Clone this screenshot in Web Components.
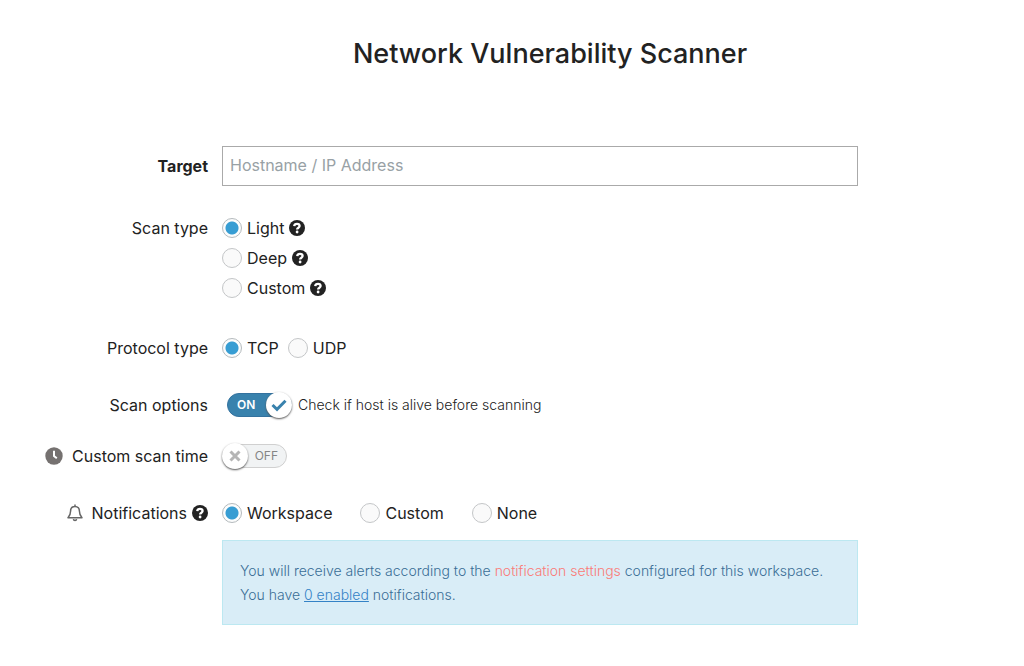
<!DOCTYPE html>
<html lang="en">
<head>
<meta charset="utf-8">
<title>Network Vulnerability Scanner</title>
<style>
body {
    margin: 0;
    background: #fff;
    color: #222;
    font-family: Inter, "Liberation Sans", sans-serif;
    font-size: 16px;
    line-height: 30px;
}
</style>
</head>
<body>
<scan-form></scan-form>

<script>
class HelpIcon extends HTMLElement {
    constructor() {
        super();
        this.attachShadow({ mode: 'open' }).innerHTML = `
    <style>
        :host{display: inline-flex;}
        svg{display: block; width: 16px; height: 16px;}
    </style>
    <svg viewBox="0 0 16 16" aria-hidden="true">
        <circle cx="8" cy="8" r="8" fill="#222"/>
        <path d="M5.2 6.2C5.4 4.6 6.5 3.9 8 3.9S10.6 4.8 10.6 6.1C10.6 7.8 8.1 7.6 8.1 9.5" fill="none" stroke="#fff" stroke-width="2.3"/>
        <circle cx="8.1" cy="12" r="1.4" fill="#fff"/>
    </svg>`;
    }
}
customElements.define('help-icon', HelpIcon);

class ClockIcon extends HTMLElement {
    constructor() {
        super();
        this.attachShadow({ mode: 'open' }).innerHTML = `
    <style>
        :host{display: inline-flex;}
        svg{display: block; width: 18px; height: 18px;}
    </style>
    <svg viewBox="0 0 18 18" aria-hidden="true">
        <circle cx="9" cy="9" r="8.7" fill="#757170"/>
        <path d="M9 3.8V9L11.8 11.2" fill="none" stroke="#fff" stroke-width="2"/>
    </svg>`;
    }
}
customElements.define('clock-icon', ClockIcon);

class BellIcon extends HTMLElement {
    constructor() {
        super();
        this.attachShadow({ mode: 'open' }).innerHTML = `
    <style>
        :host{display: inline-flex;}
        svg{display: block; width: 16px; height: 18px;}
    </style>
    <svg viewBox="0 0 16 18" aria-hidden="true" fill="none" stroke="#666" stroke-width="1.5" stroke-linejoin="round">
        <path d="M8 .6V2.4M8 2.4C5 2.4 3.6 4.6 3.6 7C3.6 10.6 2.8 11.8 1 13.7H15C13.2 11.8 12.4 10.6 12.4 7C12.4 4.6 11 2.4 8 2.4Z"/>
        <path d="M6.4 15.2C6.6 16.8 9.4 16.8 9.6 15.2"/>
    </svg>`;
    }
}
customElements.define('bell-icon', BellIcon);

// options="Light?|Deep?" - a trailing ? puts a help icon after the text
class RadioGroup extends HTMLElement {
    constructor() {
        super();
        this.attachShadow({ mode: 'open' });
    }
    connectedCallback() {
        const options = this.getAttribute('options').split('|');
        this.setAttribute('role', 'radiogroup');
        this.shadowRoot.innerHTML = `
    <style>
        :host{display: flex; flex-wrap: wrap; column-gap: 9px;}
        :host([layout="column"]){flex-direction: column; align-items: flex-start;}
        :host([layout="wide"]){column-gap: 28px;}
        label{display: flex; align-items: center; cursor: pointer;}
        input{
            appearance: none; width: 20px; height: 20px; margin: 0 5px 0 0;
            border: 1px solid #c4c6c8; border-radius: 50%; background: #fafafa;
        }
        input:checked{
            border-color: #b4babd;
            background: radial-gradient(circle, #379dd3 6px, #fbfcfc 7px);
        }
        help-icon{margin-left: 5px;}
    </style>
    ${options.map((text, i) => `
    <label><input type="radio" name="option" ${i === 0 ? 'checked' : ''}>${text.replace('?', '')}${text.endsWith('?') ? '<help-icon></help-icon>' : ''}</label>`).join('')}`;
    }
}
customElements.define('radio-group', RadioGroup);

class ToggleSwitch extends HTMLElement {
    constructor() {
        super();
        this.attachShadow({ mode: 'open' });
    }
    connectedCallback() {
        const text = this.getAttribute('text') || '';
        this.shadowRoot.innerHTML = `
    <style>
        :host{display: flex;}
        label{display: flex; align-items: center; gap: 6px; min-height: 30px; font-size: 14px; cursor: pointer;}
        input{position: absolute; opacity: 0; width: 1px; height: 1px; margin: 0;}
        .text{font-weight: 350;}
        .track{
            display: flex; align-items: center; flex-direction: row-reverse; justify-content: space-between;
            box-sizing: border-box; width: 65px; height: 24px; padding-right: 8px;
            border: 1px solid #d0d0d0; border-radius: 12px; background: #f1f3f4; color: #858585; font-size: 12px;
        }
        .knob{
            display: flex; align-items: center; justify-content: center;
            width: 26px; height: 26px; margin: 0 -1px;
            border-radius: 50%; background: #fff; box-shadow: 0 1px 2px #555;
        }
        svg{width: 16px; height: 16px; fill: none;}
        .yes, .on{display: none;}
        :checked + .track{
            flex-direction: row; padding: 0 0 0 9px;
            border-color: #34729f; background: #3982ad; color: #fff; font-weight: 600;
        }
        :checked + .track .yes{display: block;}
        :checked + .track .on{display: inline;}
        :checked + .track .no, :checked + .track .off{display: none;}
    </style>
    <label>
        <input type="checkbox" aria-label="${text || this.getAttribute('name')}" ${this.hasAttribute('checked') ? 'checked' : ''}>
        <span class="track">
            <span class="on">ON</span><span class="off">OFF</span>
            <span class="knob">
                <svg class="yes" viewBox="0 0 16 16"><path d="M1.5 8L6 12.3L14.5 3.8" stroke="#3982ad" stroke-width="3"/></svg>
                <svg class="no" viewBox="0 0 16 16"><path d="M3.5 3.5L12.5 12.5M12.5 3.5L3.5 12.5" stroke="#b5b5b5" stroke-width="3"/></svg>
            </span>
        </span>
        ${text ? `<span class="text">${text}</span>` : ''}
    </label>`;
    }
}
customElements.define('toggle-switch', ToggleSwitch);

class FormRow extends HTMLElement {
    constructor() {
        super();
        this.attachShadow({ mode: 'open' }).innerHTML = `
    <style>
        :host{display: grid; grid-template-columns: 208px minmax(0, 1fr); column-gap: 14px; margin-top: 27px;}
        :host(:first-child){margin-top: 0;}
        :host([gap="loose"]){margin-top: 30px;}
        :host([gap="tight"]){margin-top: 21px;}
        .label{display: flex; align-items: center; justify-content: flex-end; height: 30px;}
        :host([tall]) .label{height: 40px;}
    </style>
    <div class="label"><slot name="label"></slot></div>
    <div><slot></slot></div>`;
    }
}
customElements.define('form-row', FormRow);

class InfoBox extends HTMLElement {
    constructor() {
        super();
        this.attachShadow({ mode: 'open' }).innerHTML = `
    <style>
        :host{
            display: block; margin-top: 12px; padding: 18px 17px 17px;
            border: 1px solid #bce8f1; background: #d9edf7;
            color: #3a6d96; font-size: 14px; line-height: 24px; font-weight: 350;
        }
    </style>
    <slot></slot>`;
    }
}
customElements.define('info-box', InfoBox);

class ScanForm extends HTMLElement {
    constructor() {
        super();
        this.attachShadow({ mode: 'open' }).innerHTML = `
    <style>
        :host{display: block; padding: 36px 0 40px;}
        h1{margin: 0 0 74px 76px; text-align: center; font-size: 27px; line-height: 36px; font-weight: 550;}
        form{margin: 0 166px 0 0;}
        .target{font-weight: 700;}
        input{
            display: block; box-sizing: border-box; width: 100%; height: 40px; padding: 0 7px 2px;
            border: 1px solid #aaa; border-radius: 0; font: inherit; color: inherit; outline: none;
        }
        input::placeholder{color: #98a1a5; opacity: 1;}
        clock-icon, bell-icon{margin-right: 9px;}
        .caption{display: flex; align-items: center;}
        .caption help-icon{margin-left: 5px;}
        .check{margin-left: 5px;}
        .settings{color: #fb7a76; text-decoration: none;}
        .enabled{color: #3482c6; text-decoration: underline;}
    </style>
    <h1>Network Vulnerability Scanner</h1>
    <form>
        <form-row tall>
            <label class="target" slot="label" for="target">Target</label>
            <input id="target" type="text" placeholder="Hostname / IP Address">
        </form-row>
        <form-row>
            <span slot="label">Scan type</span>
            <radio-group layout="column" aria-label="Scan type" options="Light?|Deep?|Custom?"></radio-group>
        </form-row>
        <form-row gap="loose">
            <span slot="label">Protocol type</span>
            <radio-group aria-label="Protocol type" options="TCP|UDP"></radio-group>
        </form-row>
        <form-row>
            <span slot="label">Scan options</span>
            <toggle-switch class="check" checked text="Check if host is alive before scanning"></toggle-switch>
        </form-row>
        <form-row gap="tight">
            <span slot="label" class="caption"><clock-icon></clock-icon>Custom scan time</span>
            <toggle-switch name="Custom scan time"></toggle-switch>
        </form-row>
        <form-row>
            <span slot="label" class="caption"><bell-icon></bell-icon>Notifications<help-icon></help-icon></span>
            <radio-group layout="wide" aria-label="Notifications" options="Workspace|Custom|None"></radio-group>
            <info-box>
                You will receive alerts according to the <a class="settings" href="#settings">notification settings</a> configured for this workspace.<br>
                You have <a class="enabled" href="#enabled">0 enabled</a> notifications.
            </info-box>
        </form-row>
    </form>`;
    }
}
customElements.define('scan-form', ScanForm);
</script>
</body>
</html>
